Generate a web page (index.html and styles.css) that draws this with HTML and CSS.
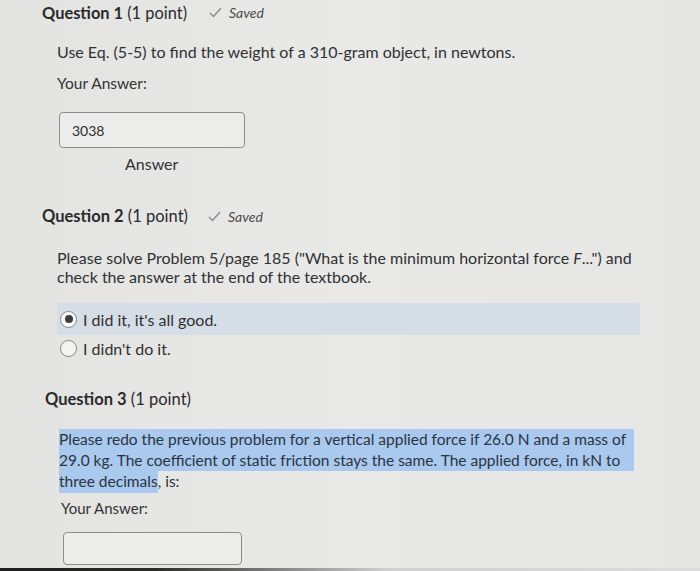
FILE: index.html
```html
<!DOCTYPE html>
<html>
<head>
<meta charset="utf-8">
<link rel="stylesheet" href="styles.css">
</head>
<body>
<div class="page">
  <div class="q-head q1-head">
    <span class="q-title"><b>Question 1</b> (1 point)</span>
    <span class="saved"><svg class="check" width="13" height="11" viewBox="0 0 13 11"><path d="M1 6 L4.5 9.5 L12 1" fill="none" stroke="#8a8a8a" stroke-width="1.4"/></svg><i>Saved</i></span>
  </div>
  <p class="q-text q1-text">Use Eq. (5-5) to find the weight of a 310-gram object, in newtons.</p>
  <p class="label q1-label">Your Answer:</p>
  <div class="answer-box q1-box">3038</div>
  <p class="answer-caption">Answer</p>

  <div class="q-head q2-head">
    <span class="q-title"><b>Question 2</b> (1 point)</span>
    <span class="saved"><svg class="check" width="13" height="11" viewBox="0 0 13 11"><path d="M1 6 L4.5 9.5 L12 1" fill="none" stroke="#8a8a8a" stroke-width="1.4"/></svg><i>Saved</i></span>
  </div>
  <p class="q-text q2-text">Please solve Problem 5/page 185 ("What is the minimum horizontal force <i>F</i>...") and<br>check the answer at the end of the textbook.</p>
  <div class="options">
    <div class="option selected"><span class="radio on"></span><span>I did it, it's all good.</span></div>
    <div class="option"><span class="radio"></span><span>I didn't do it.</span></div>
  </div>

  <div class="q-head q3-head">
    <span class="q-title"><b>Question 3</b> (1 point)</span>
  </div>
  <div class="q3-text">
    <div class="sel-block">Please redo the previous problem for a vertical applied force if 26.0 N and a mass of<br>29.0 kg. The coefficient of static friction stays the same. The applied force, in kN to</div>
    <div class="last-line"><span class="sel-inline">three decimals</span>, is:</div>
  </div>
  <p class="label q3-label">Your Answer:</p>
  <div class="answer-box q3-box"></div>
  <div class="bezel"></div>
</div>
</body>
</html>
```

FILE: styles.css
```css
html, body {
  margin: 0;
  padding: 0;
}
body {
  width: 700px;
  height: 571px;
  overflow: hidden;
  background: linear-gradient(90deg, #e3e3e1 0%, #e9e9e7 50%, #e6e6e4 100%);
  font-family: Lato, "Open Sans", sans-serif;
  color: #2f3133;
}
.page {
  display: flex;
  flex-direction: column;
  height: 571px;
}
p { margin: 0; }

.q-head {
  display: flex;
  align-items: center;
  height: 24px;
  font-size: 16.4px;
  color: #2a2a2a;
}
.q-head b { font-weight: 700; }
.q1-head { padding-left: 42px; }
.q2-head { padding-left: 42px; margin-top: 30px; font-size: 16.5px; }
.q3-head { padding-left: 45px; margin-top: 26px; font-size: 16.5px; }

.saved {
  display: flex;
  align-items: center;
  margin-left: 22px;
  font-size: 14px;
  color: #4a4a4a;
}
.saved .check { margin-right: 7px; }
.q2-head .saved { margin-left: 20px; }

.q-text { padding-left: 57px; font-size: 16px; }
.q1-text { margin-top: 17px; line-height: 22px; }
.q2-text { margin-top: 20px; line-height: 19px; font-size: 16px; }

.label { font-size: 15.5px; line-height: 22px; color: #333; }
.q1-label { padding-left: 57px; margin-top: 9px; }
.q3-label { padding-left: 61px; margin-top: 6px; line-height: 20px; font-size: 15px; }

.answer-box {
  box-sizing: border-box;
  border: 1px solid #8d8d8d;
  border-radius: 4px;
  background: #ececea;
  font-size: 14px;
  display: flex;
  align-items: center;
  padding-left: 12px;
  color: #2c2c2c;
}
.q1-box { margin: 18px 0 0 59px; width: 186px; height: 36px; }
.q3-box { margin: 14px 0 0 63px; width: 179px; height: 33px; }

.answer-caption {
  padding-left: 125px;
  margin-top: 6px;
  line-height: 20px;
  font-size: 16px;
  color: #333;
}

.options { margin-top: 17px; display: flex; flex-direction: column; }
.option {
  display: flex;
  align-items: center;
  margin-left: 57px;
  width: 583px;
  height: 26px;
  font-size: 16px;
  color: #2f2f2f;
}
.option.selected {
  height: 32px;
  background: #d5dee7;
}
.radio {
  box-sizing: border-box;
  width: 17px;
  height: 17px;
  border-radius: 50%;
  border: 1.5px solid #858585;
  background: #f4f4f4;
  margin: 0 6px 0 3px;
  display: flex;
  align-items: center;
  justify-content: center;
}
.radio.on { background: #fafafa; }
.radio.on::after {
  content: "";
  width: 8px;
  height: 8px;
  border-radius: 50%;
  background: #3d3d3d;
}

.q3-text {
  margin-top: 18px;
  padding-left: 59px;
  font-size: 15.5px;
  line-height: 21px;
  color: #2c3440;
}
.sel-block {
  width: 575px;
  background: #a9c9ee;
}
.sel-inline {
  background: #a9c9ee;
  padding: 2px 0 3px;
}

.bezel {
  margin-top: auto;
  height: 3px;
  background: linear-gradient(90deg, #1e1e1e 0%, #2a2a2a 22%, #7a7a7a 38%, #cfcfcf 55%, #dcdcdc 100%);
}
```
